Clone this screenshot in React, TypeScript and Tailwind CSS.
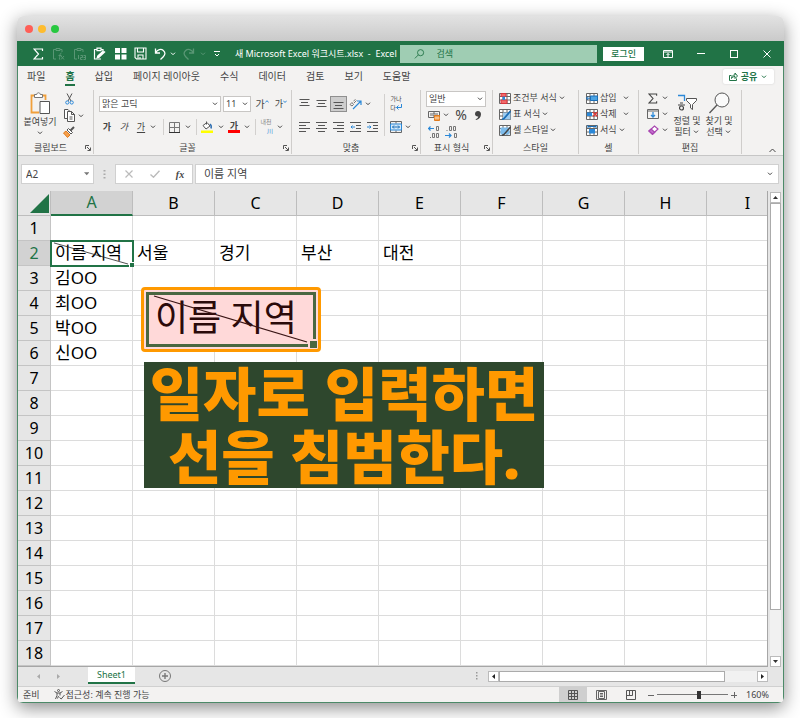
import { type ReactNode, type SVGProps } from "react";

const COLUMNS = ["A", "B", "C", "D", "E", "F", "G", "H", "I"];

const CELLS: Record<number, string[]> = {
  2: ["이름 지역", "서울", "경기", "부산", "대전"],
  3: ["김OO"],
  4: ["최OO"],
  5: ["박OO"],
  6: ["신OO"],
};

const TABS = ["파일", "홈", "삽입", "페이지 레이아웃", "수식", "데이터", "검토", "보기", "도움말"];

export default function App() {
  return (
    <div className="bg-white px-4 pt-4 pb-4 pl-[17px] font-['Noto_Sans','Noto_Sans_CJK_KR',sans-serif] text-[#444]">
      <div className="overflow-hidden rounded-md shadow-[0_5px_18px_rgba(0,0,0,0.45)]">
        {/* Window bar */}
        <div className="flex h-[25px] items-center gap-[5px] bg-linear-to-b from-[#e2e2e2] to-[#cacaca] pl-2">
          <span className="h-2 w-2 rounded-full bg-[#ff5f57]" />
          <span className="h-2 w-2 rounded-full bg-[#febc2e]" />
          <span className="h-2 w-2 rounded-full bg-[#28c840]" />
        </div>
        <TitleBar />
        <div className="border-x border-b border-[#4c8a68]">
          <TabBar />
          <Ribbon />
          <FormulaBar />
          <Sheet />
          <SheetTabs />
          <StatusBar />
        </div>
      </div>
    </div>
  );
}

function TitleBar() {
  return (
    <header className="flex h-[25px] items-center bg-[#217346] text-white">
      <div className="flex flex-1 items-center pl-[11px]">
        <Btn label="자동 합계" className="w-5"><IcoSigma width="11" height="12" /></Btn>
        <Btn label="수식 붙여넣기" className="w-[21px] opacity-25"><IcoClip width="13" height="13" mark="fx" /></Btn>
        <Btn label="값 붙여넣기" className="w-5 opacity-25"><IcoClip width="13" height="13" mark="123" /></Btn>
        <Btn label="서식 붙여넣기" className="w-[21px]"><IcoClipPen width="13" height="13" /></Btn>
        <Btn label="셀 병합" className="w-5"><IcoPanes width="13" height="13" /></Btn>
        <Btn label="저장" className="w-[21px]"><IcoSave width="13" height="13" /></Btn>
        <Btn label="실행 취소" className="w-[18px]"><IcoUndo width="12" height="12" /></Btn>
        <Chevron />
        <Btn label="다시 실행" className="ml-[2px] w-5 opacity-25"><IcoUndo width="12" height="12" className="-scale-x-100" /></Btn>
        <span className="flex opacity-25"><Chevron /></span>
        <Btn label="빠른 실행 도구 모음" className="ml-[6px] w-2">
          <svg width="6" height="6" viewBox="0 0 6 6" fill="none" stroke="currentColor"><path d="M0 .5h6M1 3l2 2 2-2" /></svg>
        </Btn>
        <h1 className="ml-[14px] text-[9px] whitespace-nowrap">새 Microsoft Excel 워크시트.xlsx &nbsp;-&nbsp; Excel</h1>
      </div>
      <label className="flex h-[18px] w-[197px] items-center gap-3 bg-[#9fcdb3] pl-[14px] text-[#217346]">
        <svg width="12" height="12" viewBox="0 0 12 12" fill="none" stroke="currentColor"><circle cx="7.5" cy="4.5" r="3.5" /><path d="M5 7L1 11" /></svg>
        <input aria-label="검색" placeholder="검색" className="w-full bg-transparent text-[9px] outline-none placeholder:text-[#217346]" />
      </label>
      <button className="ml-[6px] h-[14px] w-[41px] bg-white text-[9px] leading-[14px] font-medium text-[#217346]">로그인</button>
      <div className="flex pl-[7px] pr-px">
        <Btn label="리본 메뉴 표시 옵션" className="w-[33px]">
          <svg width="10" height="8" viewBox="0 0 10 8" fill="none" stroke="currentColor"><path d="M.5.5h9v7h-9zM.5 2h9M5 7V3.5M3.5 5L5 3.5 6.500 5" /></svg>
        </Btn>
        <Btn label="최소화" className="w-[33px]"><svg width="8" height="8" viewBox="0 0 8 8" stroke="currentColor"><path d="M0 3.500h8" /></svg></Btn>
        <Btn label="최대화" className="w-[33px]"><svg width="8" height="8" viewBox="0 0 8 8" fill="none" stroke="currentColor"><rect x=".5" y=".5" width="7" height="7" /></svg></Btn>
        <Btn label="닫기" className="w-[33px]"><svg width="8" height="8" viewBox="0 0 8 8" stroke="currentColor"><path d="M.5.5l7 7M7.500.5l-7 7" /></svg></Btn>
      </div>
    </header>
  );
}

function TabBar() {
  return (
    <nav className="flex h-[22px] items-start bg-[#f3f2f1] pr-[9px] pl-[9px]">
      <div className="flex flex-1 gap-5">
        {TABS.map((tab) => (
          <button
            key={tab}
            className={`h-5 border-b-2 text-[10px] leading-5 whitespace-nowrap ${
              tab === "홈" ? "border-[#217346] font-bold text-[#217346]" : "border-transparent"
            }`}
          >
            {tab}
          </button>
        ))}
      </div>
      <button className="mt-[3px] flex h-[15px] w-[51px] items-center justify-center gap-[3px] rounded-xs bg-white text-[9px] font-bold text-[#217346] shadow-[0_0_2px_#ccc]">
        <svg width="9" height="9" viewBox="0 0 9 9" fill="none" stroke="currentColor"><path d="M2.500 3.500h-2v5h7v-2M2.500 6.500c0-2.500 1.500-3.500 3.500-3.500V1l2.500 3L6 6.500v-2c-1.500 0-2.500.500-3.500 2z" /></svg>
        공유
        <Chevron />
      </button>
    </nav>
  );
}

function Ribbon() {
  return (
    <section className="flex h-[68px] border-b border-[#c6c6c6] bg-[#f3f2f1] pt-[2px] text-[9px]">
      <Group label="클립보드" width="w-[76px]" launcher>
        <div className="flex pl-1">
          <button className="flex w-9 flex-col items-center pt-[2px] leading-[11px]">
            <IcoPaste width="20" height="23" />
            <span className="pt-px">붙여넣기</span>
            <span className="pt-1"><Chevron /></span>
          </button>
          <div className="ml-[3px] flex flex-col">
            <Btn label="잘라내기" className="h-[17px] w-4"><IcoCut width="9" height="12" /></Btn>
            <div className="flex items-center">
              <Btn label="복사" className="h-[17px] w-4"><IcoCopy width="13" height="13" /></Btn>
              <Chevron />
            </div>
            <Btn label="서식 복사" className="h-4 w-4"><IcoBrush width="12" height="12" /></Btn>
          </div>
        </div>
      </Group>

      <Group label="글꼴" width="w-[198px]" launcher>
        <div className="flex flex-col gap-[5px] pt-[6px] pl-[5px]">
          <div className="flex items-center gap-[2px]">
            <Picker label="글꼴" value="맑은 고딕" width="w-[122px]" />
            <Picker label="글꼴 크기" value="11" width="w-7" />
            <Btn label="글꼴 크기 크게" className="w-[18px] text-[10px]">가<IcoCaret width="4" height="8" /></Btn>
            <Btn label="글꼴 크기 작게" className="w-4 text-[9px]">가<IcoCaret width="4" height="8" down /></Btn>
          </div>
          <div className="flex h-5 items-center text-[9px]">
            <Btn label="굵게" className="w-4 font-bold">가</Btn>
            <Btn label="기울임꼴" className="w-[18px] italic">가</Btn>
            <Btn label="밑줄" className="w-4 underline underline-offset-2">가</Btn>
            <Chevron />
            <Divider className="ml-[6px] h-4" />
            <Btn label="테두리" className="w-5"><IcoBorders width="11" height="11" /></Btn>
            <Chevron />
            <Divider className="ml-1 h-4" />
            <Btn label="채우기 색" className="w-5"><IcoFill width="12" height="12" /></Btn>
            <Chevron />
            <Btn label="글꼴 색" className="w-[18px] flex-col font-bold leading-[9px]">
              가<span className="h-[3px] w-[12px] bg-[#f00]" />
            </Btn>
            <Chevron />
            <Divider className="ml-1 h-4" />
            <Btn label="윗주 필드" className="h-5 w-5 flex-col text-[6px] leading-[9px] text-[#888]">
              내천<span className="pl-2 text-[#2b88d8]">川</span>
            </Btn>
            <Chevron />
          </div>
        </div>
      </Group>

      <Group label="맞춤" width="w-[129px]" launcher>
        <div className="flex pt-1 pl-1">
          <div className="flex w-[88px] flex-col gap-[3px]">
            <div className="flex h-5 items-center">
              <Btn label="위쪽 맞춤" className="h-4 w-[17px]"><IcoLines ys={[1, 4, 7]} /></Btn>
              <Btn label="가운데 맞춤" className="h-4 w-[17px]"><IcoLines ys={[2, 5, 8]} /></Btn>
              <Btn label="아래쪽 맞춤" className="h-4 w-[17px] border border-[#8f8f8f] bg-[#cdcdcd]"><IcoLines ys={[4, 7, 10]} /></Btn>
              <Btn label="방향" className="w-[17px]"><IcoOrient width="13" height="12" /></Btn>
              <Chevron />
            </div>
            <div className="flex h-5 items-center">
              <Btn label="왼쪽 맞춤" className="w-[17px]"><IcoAlign at="left" /></Btn>
              <Btn label="가운데 맞춤 (가로)" className="w-[17px]"><IcoAlign at="center" /></Btn>
              <Btn label="오른쪽 맞춤" className="w-[17px]"><IcoAlign at="right" /></Btn>
              <Btn label="내어쓰기" className="w-[17px]"><IcoIndent width="11" height="11" /></Btn>
              <Btn label="들여쓰기" className="w-[17px]"><IcoIndent width="11" height="11" right /></Btn>
            </div>
          </div>
          <Divider className="h-[42px]" />
          <div className="flex flex-col gap-[3px] pl-[3px]">
            <Btn label="텍스트 줄 바꿈" className="h-5 w-4 flex-col text-[6px] leading-[9px]">
              가나
              <span className="flex">다<svg width="6" height="6" viewBox="0 0 6 6" fill="none" stroke="#2b88d8"><path d="M5.500 0v3.500h-5M2.500 1.500l-2 2 2 2" /></svg></span>
            </Btn>
            <div className="flex h-5 items-center">
              <Btn label="병합하고 가운데 맞춤" className="w-4"><IcoMerge width="12" height="12" /></Btn>
              <Chevron />
            </div>
          </div>
        </div>
      </Group>

      <Group label="표시 형식" width="w-[72px]" launcher>
        <div className="flex flex-col pt-px pl-[5px]">
          <Picker label="표시 형식" value="일반" width="w-[60px]" />
          <div className="flex h-4 items-center">
            <Btn label="회계 표시 형식" className="w-4"><IcoMoney width="13" height="11" /></Btn>
            <Chevron />
            <Btn label="백분율 스타일" className="ml-1 w-[14px] text-[14px] leading-4">%</Btn>
            <Btn label="쉼표 스타일" className="ml-1 w-3">
              <svg width="6" height="9" viewBox="0 0 6 9" fill="currentColor"><path d="M3 0c2 0 3 1.300 3 3.200C6 6 4 8.500 1 9l-.4-.9C2.400 7.500 3.200 6.500 3.300 5.400 1.500 5.700 0 4.600 0 2.900 0 1.200 1.300 0 3 0z" /></svg>
            </Btn>
          </div>
          <div className="flex h-[18px] items-center">
            <Btn label="자릿수 늘림" className="w-4"><IcoDecimal width="12" height="12" /></Btn>
            <Btn label="자릿수 줄임" className="w-[18px]"><IcoDecimal width="12" height="12" less /></Btn>
          </div>
        </div>
      </Group>

      <Group label="스타일" width="w-[86px]">
        <div className="flex flex-col pl-[6px]">
          <MenuRow icon={<IcoGridTone tone="red" />} label="조건부 서식" />
          <MenuRow icon={<IcoGridTone tone="pen" />} label="표 서식" />
          <MenuRow icon={<IcoGridTone tone="fill" />} label="셀 스타일" />
        </div>
      </Group>

      <Group label="셀" width="w-[60px]">
        <div className="flex flex-col pl-[7px]">
          <MenuRow icon={<IcoGridTone tone="insert" />} label="삽입" wide />
          <MenuRow icon={<IcoGridTone tone="delete" />} label="삭제" wide />
          <MenuRow icon={<IcoGridTone tone="format" />} label="서식" />
        </div>
      </Group>

      <Group label="편집" width="w-[103px]">
        <div className="flex pl-[6px]">
          <div className="flex flex-col">
            <div className="flex h-4 items-center"><Btn label="합계" className="w-4"><IcoSigma width="10" height="11" /></Btn><Chevron /></div>
            <div className="flex h-4 items-center">
              <Btn label="채우기" className="w-4">
                <svg width="12" height="10" viewBox="0 0 12 10" fill="none" stroke="#666"><path d="M.5.5h11v9H.5zM.5 2h11" /><path d="M6 3v5M4 6l2 2 2-2" stroke="#2b88d8" strokeWidth="1.300" /></svg>
              </Btn>
              <Chevron />
            </div>
            <div className="flex h-4 items-center">
              <Btn label="지우기" className="w-4">
                <svg width="11" height="10" viewBox="0 0 11 10" stroke="#a846b0" strokeWidth="1.200"><path d="M1 6l5.500-5L10 4 4.500 9.300z" fill="#fff" /><path d="M1 6l2.200-2 3.500 3.300-2.200 2z" fill="#c46fd0" /></svg>
              </Btn>
              <Chevron />
            </div>
          </div>
          <button className="ml-[2px] flex w-8 flex-col items-center pt-1 leading-[11px] whitespace-nowrap">
            <IcoSort width="20" height="18" />
            <span className="pt-[3px]">정렬 및</span>
            <span className="flex items-center gap-px">필터<Chevron /></span>
          </button>
          <button className="flex w-8 flex-col items-center pt-[2px] leading-[11px] whitespace-nowrap">
            <svg width="21" height="22" viewBox="0 0 21 22" fill="none" stroke="#555"><circle cx="13" cy="8" r="7" fill="#fafafa" /><path d="M8 13l-7.500 8" strokeWidth="1.300" /></svg>
            <span className="pt-px">찾기 및</span>
            <span className="flex items-center gap-px">선택<Chevron /></span>
          </button>
        </div>
      </Group>
      <Btn label="리본 메뉴 축소" className="ml-auto self-end pr-[7px] pb-[2px]">
        <svg width="7" height="5" viewBox="0 0 7 5" fill="none" stroke="currentColor"><path d="M.5 4l3-3 3 3" /></svg>
      </Btn>
    </section>
  );
}

function FormulaBar() {
  return (
    <div className="flex h-[35px] items-start bg-[#e6e6e6] pt-[8px] pr-1 pl-[3px] text-[10px]">
      <label className="flex h-5 w-[73px] items-center border border-[#d0d0d0] bg-white pr-1 pl-1">
        <input aria-label="이름 상자" defaultValue="A2" className="w-full text-[10px] outline-none" />
        <svg width="6" height="4" viewBox="0 0 6 4" fill="#777"><path d="M0 0h6L3 3.500z" /></svg>
      </label>
      <svg className="mt-[6px] ml-[9px]" width="3" height="9" viewBox="0 0 3 9" fill="#aaa"><path d="M.5 0h2v1.500h-2zM.5 3.500h2V5h-2zM.5 7h2v1.500h-2z" /></svg>
      <div className="ml-[9px] flex h-5 w-[78px] items-center border border-[#d0d0d0] bg-white">
        <Btn label="취소" className="w-[26px] text-[#bbb]"><svg width="8" height="8" viewBox="0 0 8 8" stroke="currentColor" strokeWidth="1.200"><path d="M.5.5l7 7M7.500.5l-7 7" /></svg></Btn>
        <Btn label="입력" className="w-[26px] text-[#bbb]"><svg width="10" height="8" viewBox="0 0 10 8" fill="none" stroke="currentColor" strokeWidth="1.400"><path d="M.5 4.500l3 2.700L9.500.7" /></svg></Btn>
        <Btn label="함수 삽입" className="w-6 font-['Liberation_Serif',serif] text-[10px] font-bold italic">fx</Btn>
      </div>
      <label className="ml-[2px] flex h-5 flex-1 items-center border border-[#d0d0d0] bg-white pr-1 pl-2">
        <input aria-label="수식 입력줄" defaultValue="이름 지역" className="w-full text-[11px] outline-none" />
        <Chevron />
      </label>
    </div>
  );
}

function Sheet() {
  return (
    <div className="flex bg-[#e6e6e6]">
      <div className="relative flex-1 overflow-hidden border-r border-b border-[#a6a6a6] text-black">
        <table className="w-[771px] min-w-full table-fixed border-separate border-spacing-0">
          <colgroup>
            <col className="w-[33px]" />
            {COLUMNS.map((col) => <col key={col} className="w-[82px]" />)}
          </colgroup>
          <thead>
            <tr className="h-[25px]">
              <th className="border-r border-b border-[#bdbdbd] bg-[#e6e6e6] p-0">
                <svg className="ml-auto mr-px" width="19" height="19" viewBox="0 0 19 19" fill="#217346"><path d="M19 0v19H0z" /></svg>
              </th>
              {COLUMNS.map((col) => (
                <th
                  key={col}
                  scope="col"
                  className={`border-r p-0 text-[16px] leading-[23px] font-normal ${
                    col === "A"
                      ? "border-b-2 border-r-[#bdbdbd] border-b-[#217346] bg-[#d2d2d2] text-[#217346]"
                      : "border-b border-[#bdbdbd] bg-[#e6e6e6]"
                  }`}
                >
                  {col}
                </th>
              ))}
            </tr>
          </thead>
          <tbody>
            {Array.from({ length: 18 }, (_, i) => i + 1).map((row) => (
              <tr key={row} className="h-[25px]">
                <th
                  scope="row"
                  className={`border-r border-b border-[#c4c4c4] p-0 text-[16px] leading-6 font-normal ${
                    row === 2 ? "bg-[#d2d2d2] text-[#217346]" : "bg-[#e6e6e6]"
                  }`}
                >
                  {row}
                </th>
                {COLUMNS.map((col, i) => {
                  const selected = row === 2 && col === "A";
                  return (
                    <td
                      key={col}
                      className={`border-r border-b border-[#dcdcdc] bg-white p-0 pl-1 text-[17px] leading-6 whitespace-nowrap ${
                        selected ? "relative outline-2 -outline-offset-1 outline-[#217346]" : ""
                      }`}
                    >
                      {CELLS[row]?.[i]}
                      {selected && (
                        <>
                          <svg className="absolute inset-0 h-full w-full" viewBox="0 0 82 25" preserveAspectRatio="none" stroke="#222" strokeWidth=".8"><path d="M3 2l75 22" /></svg>
                          <span className="absolute -right-[2px] -bottom-[2px] h-[5px] w-[5px] border-t border-l border-white bg-[#217346]" />
                        </>
                      )}
                    </td>
                  );
                })}
              </tr>
            ))}
          </tbody>
        </table>

        {/* Enlarged cell callout */}
        <div className="absolute top-[96px] left-[123px] h-[65px] w-[180px] rounded-sm border-3 border-[#ff9900] bg-[#ffd9d9] p-[2px]">
          <div className="relative h-full border-3 border-[#4a6741] pl-[6px] text-[36px] leading-[46px] whitespace-nowrap text-[#2b0a0a]">
            이름 지역
            <svg className="absolute inset-0 h-full w-full" viewBox="0 0 164 49" preserveAspectRatio="none" stroke="#3a1515" strokeWidth="1.300"><path d="M5 1l153 46" /></svg>
            <span className="absolute -right-1 -bottom-1 h-[9px] w-[9px] border-t-2 border-l-2 border-[#ffd9d9] bg-[#4a6741]" />
          </div>
        </div>
        <p className="absolute top-[171px] left-[126px] h-[126px] w-[400px] bg-[#2e472d] text-center text-[58px] leading-[63px] font-black whitespace-nowrap text-[#ff9900]">
          일자로 입력하면
          <br />
          선을 침범한다.
        </p>
      </div>

      {/* Vertical scroll bar */}
      <div className="mt-px ml-[2px] mr-[2px] flex w-[11px] flex-col">
        <Btn label="위로 스크롤" className="h-[11px] w-full border border-[#bbb] bg-white"><svg width="5" height="3" viewBox="0 0 5 3" fill="#333"><path d="M2.500 0L5 3H0z" /></svg></Btn>
        <div className="h-[407px] border border-[#ababab] bg-white" />
        <div className="flex-1 bg-[#f1f1f1]" />
        <Btn label="아래로 스크롤" className="h-[11px] w-full border border-[#bbb] bg-white"><svg width="5" height="3" viewBox="0 0 5 3" fill="#333"><path d="M2.500 3L5 0H0z" /></svg></Btn>
      </div>
    </div>
  );
}

function SheetTabs() {
  return (
    <div className="flex h-[19px] items-start bg-[#e6e6e6] text-[#aaa]">
      <Btn label="이전 시트" className="ml-[10px] h-[18px] w-5"><svg width="3" height="5" viewBox="0 0 3 5" fill="currentColor"><path d="M3 0v5L0 2.500z" /></svg></Btn>
      <Btn label="다음 시트" className="h-[18px] w-5"><svg width="3" height="5" viewBox="0 0 3 5" fill="currentColor"><path d="M0 0v5l3-2.500z" /></svg></Btn>
      <button className="ml-5 h-[17px] w-[47px] border-b-2 border-[#217346] bg-white text-[9px] leading-[15px] text-[#217346]">Sheet1</button>
      <Btn label="새 시트" className="ml-[22px] h-[18px] w-4 text-[#777]">
        <svg width="12" height="12" viewBox="0 0 12 12" fill="none" stroke="currentColor"><circle cx="6" cy="6" r="5.500" /><path d="M6 3v6M3 6h6" strokeWidth="1.400" /></svg>
      </Btn>
      <div className="ml-auto flex h-[18px] w-[307px] items-center pr-[15px]">
        <svg className="mr-[10px]" width="2" height="8" viewBox="0 0 2 8" fill="#999"><path d="M0 0h1.500v1.500H0zM0 3h1.500v1.500H0zM0 6h1.500v1.500H0z" /></svg>
        <Btn label="왼쪽으로 스크롤" className="h-[11px] w-[11px] border border-[#bbb] bg-white"><svg width="3" height="5" viewBox="0 0 3 5" fill="#222"><path d="M3 0v5L0 2.500z" /></svg></Btn>
        <div className="h-[11px] w-[226px] border border-[#ababab] bg-white" />
        <div className="h-[11px] flex-1 bg-[#f1f1f1]" />
        <Btn label="오른쪽으로 스크롤" className="h-[11px] w-[11px] border border-[#bbb] bg-white"><svg width="3" height="5" viewBox="0 0 3 5" fill="#222"><path d="M0 0v5l3-2.500z" /></svg></Btn>
      </div>
    </div>
  );
}

function StatusBar() {
  return (
    <footer className="flex h-4 items-center border-t border-[#d0d0d0] bg-[#f3f2f1] pr-[14px] pl-[5px] text-[9px] leading-4">
      <span>준비</span>
      <svg className="ml-[14px]" width="11" height="11" viewBox="0 0 11 11" fill="none" stroke="#555"><circle cx="4.500" cy="1.500" r="1" /><path d="M.5 2.500L3 4v2.500L1.500 10M8.500 2.500L6 4v2.500M3 4h3M4.500 7L3.500 9.500M5.500 8.500l1.700 1.500L10.500 6" /></svg>
      <span className="ml-px">접근성: 계속 진행 가능</span>
      <div className="ml-auto flex h-full">
        <Btn label="기본" className="w-7 bg-[#cfcfcf]"><svg width="10" height="10" viewBox="0 0 10 10" fill="none" stroke="#555"><path d="M.5.5h9v9h-9zM.5 3.500h9M.5 6.500h9M3.500.5v9M6.500.5v9" /></svg></Btn>
        <Btn label="페이지 레이아웃 보기" className="w-[29px]"><svg width="11" height="10" viewBox="0 0 11 10" fill="none" stroke="#666"><path d="M.5.5h10v9H.5z" /><path d="M2.500 1.500h6v7h-6zM4 3.500h3M4 5h3M4 6.500h3" /></svg></Btn>
        <Btn label="페이지 나누기 미리 보기" className="w-[29px]"><svg width="10" height="10" viewBox="0 0 10 10" fill="none" stroke="#555"><path d="M.5.5h9v9h-9zM.5 5.500h6v-5M3.500.5v5" /></svg></Btn>
      </div>
      <Btn label="축소" className="w-3"><svg width="6" height="6" viewBox="0 0 6 6" stroke="#666"><path d="M0 3.500h6" /></svg></Btn>
      <input
        type="range"
        aria-label="확대/축소"
        min="10"
        max="400"
        defaultValue="245"
        className="h-2 w-[71px] appearance-none bg-[linear-gradient(#777,#777)] bg-[length:100%_1px] bg-center bg-no-repeat [&::-webkit-slider-thumb]:h-2 [&::-webkit-slider-thumb]:w-1 [&::-webkit-slider-thumb]:appearance-none [&::-webkit-slider-thumb]:bg-[#333]"
      />
      <Btn label="확대" className="w-3"><svg width="6" height="6" viewBox="0 0 6 6" stroke="#666"><path d="M0 3.500h6M3.500 0v6" /></svg></Btn>
      <span className="ml-[6px]">160%</span>
    </footer>
  );
}

/* ── Shared pieces ── */
function Btn({ label, className = "", children }: { label: string; className?: string; children: ReactNode }) {
  return (
    <button aria-label={label} className={`flex shrink-0 items-center justify-center ${className}`}>
      {children}
    </button>
  );
}

function Group({ label, width, launcher, children }: { label: string; width: string; launcher?: boolean; children: ReactNode }) {
  return (
    <div className={`flex h-16 shrink-0 flex-col border-r border-[#cfcdcb] ${width}`}>
      <div className="h-[54px]">{children}</div>
      <div className="flex h-3 items-center leading-3">
        <span className="flex-1 text-center">{label}</span>
        {launcher && (
          <Btn label={`${label} 설정`} className="w-[10px]">
            <svg width="6" height="6" viewBox="0 0 6 6" fill="none" stroke="#555"><path d="M.5 4V.5H4M2 2l3 3M5.500 2.500v3h-3" /></svg>
          </Btn>
        )}
      </div>
    </div>
  );
}

function Picker({ label, value, width }: { label: string; value: string; width: string }) {
  return (
    <div className={`flex h-4 items-center border border-[#c8c6c4] bg-white pr-px pl-[2px] ${width}`}>
      <select aria-label={label} className="h-full min-w-0 flex-1 appearance-none text-[9px] leading-[14px] outline-none">
        <option>{value}</option>
      </select>
      <Chevron />
    </div>
  );
}

function MenuRow({ icon, label, wide }: { icon: ReactNode; label: string; wide?: boolean }) {
  return (
    <button className="flex h-4 items-center whitespace-nowrap">
      {icon}
      <span className="ml-[2px]">{label}</span>
      <span className={wide ? "ml-[5px]" : "ml-px"}><Chevron /></span>
    </button>
  );
}

function Divider({ className }: { className: string }) {
  return <span className={`w-px shrink-0 bg-[#d2d0ce] ${className}`} />;
}

function Chevron() {
  return <svg className="shrink-0" width="8" height="4" viewBox="0 0 8 4" fill="none" stroke="currentColor"><path d="M2 .7l2 2 2-2" /></svg>;
}

/* ── Icons ── */
function IcoSigma(p: SVGProps<SVGSVGElement>) {
  return <svg {...p} viewBox="0 0 11 12" fill="none" stroke="currentColor" strokeWidth="1.200"><path d="M9.500 3V1H1l4.500 5L1 11h8.500V9" /></svg>;
}
function IcoClip({ mark, ...p }: SVGProps<SVGSVGElement> & { mark: "fx" | "123" }) {
  return (
    <svg {...p} viewBox="0 0 13 13" fill="none" stroke="currentColor">
      <path d="M4 12H1.500V2.500H4M8 2.500h2V5M4 1.500h4v2H4z" />
      {mark === "fx" ? <path d="M9.500 6c-1.500 0-1.500 1-2 6.500M6.500 8.500h3M9 9l3 3.500M12 9l-3 3.500" /> : <path d="M5.500 8v4M7.500 8.500h2v2h-2v2h2M10.500 8.500h2v4h-2M10.500 10.500h2" />}
    </svg>
  );
}
function IcoClipPen(p: SVGProps<SVGSVGElement>) {
  return <svg {...p} viewBox="0 0 13 13" fill="none" stroke="currentColor" strokeWidth="1.200"><path d="M8 12H1.500V2.500H4M8 2.500h2V4M4 1.200h4v2.500H4z" /><path d="M12 4.500L6 10l-1.500.5L5 9l5.500-5" strokeWidth="1.600" /></svg>;
}
function IcoPanes(p: SVGProps<SVGSVGElement>) {
  return <svg {...p} viewBox="0 0 13 13" fill="currentColor"><path d="M1 1h5v5H1zM7.500 1h5v5h-5zM1 7.500h5v5H1zM7.500 7.500h5v5h-5z" /></svg>;
}
function IcoSave(p: SVGProps<SVGSVGElement>) {
  return <svg {...p} viewBox="0 0 13 13" fill="none" stroke="currentColor" strokeWidth="1.100"><path d="M1 1h11v11H2.500L1 10.500zM3.500 1v4h6V1M4 12V8h5v4M6 10v2" /></svg>;
}
function IcoUndo(p: SVGProps<SVGSVGElement>) {
  return <svg {...p} viewBox="0 0 12 12" fill="none" stroke="currentColor" strokeWidth="1.300"><path d="M1.500.5V5H6M1.500 5C3.500 1.500 7 .5 9.300 2.500s2 4.200 0 6.200L6.500 11.500" /></svg>;
}
function IcoPaste(p: SVGProps<SVGSVGElement>) {
  return (
    <svg {...p} viewBox="0 0 20 23" fill="none">
      <path d="M9 20.500H1.500v-17h14V8" stroke="#f0a03c" strokeWidth="1.800" />
      <path d="M4.500 5.500v-3h2.200c.3-2.300 3.300-2.300 3.600 0h2.200v3z" fill="#fff" stroke="#777" />
      <path d="M10 9.500h9.500v12H10z" fill="#fff" stroke="#555" />
    </svg>
  );
}
function IcoCut(p: SVGProps<SVGSVGElement>) {
  return <svg {...p} viewBox="0 0 9 12" fill="none"><path d="M2 .5l4 7.500M7 .5L3 8" stroke="#555" /><circle cx="2.300" cy="9.500" r="1.600" stroke="#2b88d8" /><circle cx="6.700" cy="9.500" r="1.600" stroke="#2b88d8" /></svg>;
}
function IcoCopy(p: SVGProps<SVGSVGElement>) {
  return <svg {...p} viewBox="0 0 13 13" fill="#fff" stroke="#555"><path d="M4.500 9.500h-3v-9H5L7 2.500" /><path d="M4.500 2.500h4l3 3v7h-7zM8.500 2.500v3h3M6.500 8h3M6.500 10h3" /></svg>;
}
function IcoBrush(p: SVGProps<SVGSVGElement>) {
  return <svg {...p} viewBox="0 0 12 12" fill="none"><path d="M3 5l4 4-2.500 2.500L.5 7z" fill="#f5a04c" stroke="#e07b1f" /><path d="M4 4l4 4 1.500-1.500-4-4z" fill="#fff" stroke="#555" /><path d="M7.500 4.500L11 1" stroke="#555" strokeWidth="2" /></svg>;
}
function IcoCaret({ down, ...p }: SVGProps<SVGSVGElement> & { down?: boolean }) {
  return <svg {...p} viewBox="0 0 4 8" fill="none" stroke="#2b88d8"><path d={down ? "M.3.700L2 2.500 3.700.700" : "M.3 2.500L2 .7l1.700 1.800"} /></svg>;
}
function IcoBorders(p: SVGProps<SVGSVGElement>) {
  return <svg {...p} viewBox="0 0 11 11" fill="none" stroke="#777"><path d="M.5.5h10v10H.5zM5.500.5v10M.5 5.500h10" /><path d="M0 10.500h11" stroke="#333" /></svg>;
}
function IcoFill(p: SVGProps<SVGSVGElement>) {
  return <svg {...p} viewBox="0 0 12 12" fill="none"><path d="M5.500.5v3M2 4.500L6 1.500l3 3.500-4 3z" stroke="#555" fill="#fff" /><path d="M9 3c1.500 1 1.500 2.500 1 4.500" stroke="#2b6cb0" strokeWidth="1.500" /><path d="M0 9.500h12V12H0z" fill="#ff0" /></svg>;
}
function IcoLines({ ys }: { ys: number[] }) {
  return <svg width="11" height="12" viewBox="0 0 11 12" stroke="#555">{ys.map((y, i) => <path key={y} d={i === 1 ? `M2 ${y + 0.5}h7` : `M.5 ${y + 0.5}h10`} />)}</svg>;
}
function IcoAlign({ at }: { at: "left" | "center" | "right" }) {
  const x = { left: 0, center: 2, right: 4 }[at];
  return <svg width="11" height="11" viewBox="0 0 11 11" stroke="#555"><path d={`M0 .5h11M${x} 3.500h7M0 6.500h11M${x} 9.500h7`} /></svg>;
}
function IcoIndent({ right, ...p }: SVGProps<SVGSVGElement> & { right?: boolean }) {
  return <svg {...p} viewBox="0 0 11 11" fill="none" stroke="#555"><path d="M0 .5h11M6 3.500h5M6 6.500h5M0 9.500h11" /><path d={right ? "M0 5h4M2.500 3.500L4 5 2.500 6.500" : "M1 5h4M2.500 3.500L1 5l1.500 1.500"} stroke="#2b88d8" /></svg>;
}
function IcoOrient(p: SVGProps<SVGSVGElement>) {
  return <svg {...p} viewBox="0 0 13 12" fill="none"><path d="M1 6.500l2-2 1.500 2L3 8zM4.500 3l2-1.500M5 5L7.500 2.500" stroke="#777" /><path d="M4 11l7.500-7.500M8 3h4v4" stroke="#2b88d8" strokeWidth="1.200" /></svg>;
}
function IcoMerge(p: SVGProps<SVGSVGElement>) {
  return <svg {...p} viewBox="0 0 12 12" fill="none"><path d="M.5.5h11v11H.5zM6 .5v2M6 9.500v2" stroke="#666" /><path d="M.5 3h11v6H.5z" fill="#d5e9f8" stroke="#2b88d8" /><path d="M2.500 6h7M4 4.500L2.500 6 4 7.500M8 4.500L9.500 6 8 7.500" stroke="#1b6fb8" /></svg>;
}
function IcoMoney(p: SVGProps<SVGSVGElement>) {
  return <svg {...p} viewBox="0 0 13 11" fill="none"><path d="M.5 1.500h11v6H.5zM3 3v3M5 3h2v3H5zM9 3v3" stroke="#666" /><path d="M6.500 5.500h5v5h-5z" fill="#f5a04c" stroke="#e07b1f" /><path d="M6.500 8h5" stroke="#fff" strokeWidth=".7" /></svg>;
}
function IcoDecimal({ less, ...p }: SVGProps<SVGSVGElement> & { less?: boolean }) {
  return (
    <svg {...p} viewBox="0 0 12 12" fill="none">
      {less ? (
        <>
          <path d="M4.500.5h2v4h-2zM8.500.5h2v4h-2zM9.500 7.500h2v4h-2zM2 4v1" stroke="#777" />
          <path d="M0 9.500h6M4 7.500l2 2-2 2" stroke="#2b88d8" strokeWidth="1.200" />
        </>
      ) : (
        <>
          <path d="M8.500.5h2v4h-2zM4.500 7.500h2v4h-2zM8.500 7.500h2v4h-2zM2.500 11v1" stroke="#777" />
          <path d="M6 2.500H0M2.500.5l-2 2 2 2" stroke="#2b88d8" strokeWidth="1.200" />
        </>
      )}
    </svg>
  );
}
function IcoGridTone({ tone }: { tone: "red" | "pen" | "fill" | "insert" | "delete" | "format" }) {
  return (
    <svg width="12" height="11" viewBox="0 0 12 11" fill="none" className="shrink-0">
      <path d="M.5.5h11v10H.5zM.5 3.500h11M.5 7h11M4 .5v10M8 .5v10" fill="#fff" stroke="#666" />
      {tone === "red" && <><path d="M2 .5h5v3H2zM2 7h6v3.500H2z" fill="#f06a6a" stroke="#d9363e" /><path d="M3.500 3.500H6V7H3.500z" fill="#2b88d8" /></>}
      {tone === "pen" && <><path d="M4 3.500h7.500v7H4z" fill="#9ccbf0" /><path d="M11.500 2L5 9.500l-2 1" stroke="#1b6fb8" strokeWidth="1.800" /></>}
      {tone === "fill" && <><path d="M1.500 2.500h9v7h-9z" fill="#7dbcec" /><path d="M11.500 2L5 9.500l-2 1" stroke="#444" strokeWidth="1.500" /></>}
      {tone === "insert" && <><path d="M4.500 3h7v4.500h-7z" fill="#4ba3e3" stroke="#1b6fb8" /><path d="M4 5.200H0M2 3.500L.5 5.200 2 7" stroke="#1b6fb8" /></>}
      {tone === "delete" && <><path d="M1 3.500h5V7H1z" fill="#2b88d8" /><path d="M7 3l4.500 4.500M11.500 3L7 7.500" stroke="#e03a3a" strokeWidth="1.400" /></>}
      {tone === "format" && <><path d="M3 4h6v4.500H3z" fill="#2b88d8" /><path d="M2 1.500h8M2 0v3M10 0v3" stroke="#1b6fb8" /></>}
    </svg>
  );
}
function IcoSort(p: SVGProps<SVGSVGElement>) {
  return (
    <svg {...p} viewBox="0 0 20 18" fill="none">
      <path d="M1 1.500h6.500V7" stroke="#2b88d8" strokeWidth="1.300" />
      <path d="M3 9h3M1 11h7" stroke="#444" /><circle cx="4.500" cy="14" r="2" stroke="#444" strokeWidth="1.200" />
      <path d="M9.500 4.500h10v2l-4 4v5l-2-1.500v-3.500l-4-4z" fill="#fff" stroke="#555" />
    </svg>
  );
}
